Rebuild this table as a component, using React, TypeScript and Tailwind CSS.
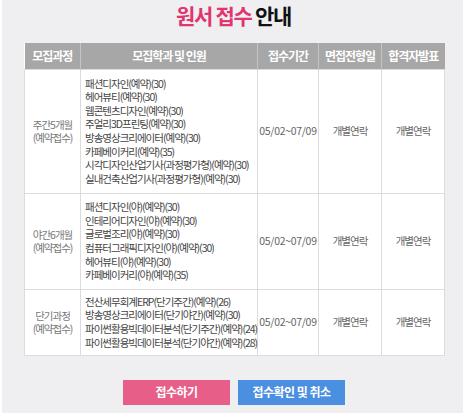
import React from "react";

const rows = [
  {
    h: "h-[124px]",
    course: ["주간5개월", "(예약접수)"],
    items: [
      "패션디자인(예약)(30)",
      "헤어뷰티(예약)(30)",
      "웹콘텐츠디자인(예약)(30)",
      "주얼리3D프린팅(예약)(30)",
      "방송영상크리에이터(예약)(30)",
      "카페베이커리(예약)(35)",
      "시각디자인산업기사(과정평가형)(예약)(30)",
      "실내건축산업기사(과정평가형)(예약)(30)",
    ],
  },
  {
    h: "h-[96px]",
    course: ["야간6개월", "(예약접수)"],
    items: [
      "패션디자인(야)(예약)(30)",
      "인테리어디자인(야)(예약)(30)",
      "글로벌조리(야)(예약)(30)",
      "컴퓨터그래픽디자인(야)(예약)(30)",
      "헤어뷰티(야)(예약)(30)",
      "카페베이커리(야)(예약)(35)",
    ],
  },
  {
    h: "h-[66px]",
    course: ["단기과정", "(예약접수)"],
    items: [
      "전산세무회계ERP(단기주간)(예약)(26)",
      "방송영상크리에이터(단기야간)(예약)(30)",
      "파이썬활용빅데이터분석(단기주간)(예약)(24)",
      "파이썬활용빅데이터분석(단기야간)(예약)(28)",
    ],
  },
];

const font = { fontFamily: '"Noto Sans CJK KR", "Noto Sans", sans-serif' };

export default function App() {
  return (
    <div className="w-[474px] h-[418px] bg-white" style={font}>
      <div className="ml-[2px] w-[461px] h-[413px] bg-[#efeff2] flex flex-col">
        <h1 className="h-[30px] text-center text-[21px] leading-[30px] font-bold tracking-[-1.3px] text-[#111] pl-[2px]">
          <span className="text-[#e2346e]">원서 접수</span> 안내
        </h1>
        <div className="mt-[13px] ml-[22px] w-[420px]">
          <table className="w-[420px] table-fixed border-collapse bg-white text-[10.5px] tracking-[-1px]">
            <colgroup>
              <col className="w-[56px]" />
              <col className="w-[177px]" />
              <col className="w-[61px]" />
              <col className="w-[63px]" />
              <col className="w-[63px]" />
            </colgroup>
            <thead>
              <tr className="bg-[#a7a7a7] text-white text-[12px] font-bold">
                <th className="h-[26px] p-0 border-r border-[#c4c4c4] font-bold">모집과정</th>
                <th className="h-[26px] p-0 border-r border-[#c4c4c4] font-bold">모집학과 및 인원</th>
                <th className="h-[26px] p-0 border-r border-[#c4c4c4] font-bold">접수기간</th>
                <th className="h-[26px] p-0 border-r border-[#c4c4c4] font-bold">면접전형일</th>
                <th className="h-[26px] p-0 font-bold">합격자발표</th>
              </tr>
            </thead>
            <tbody>
              {rows.map((r, i) => (
                <tr key={i} className="border border-[#dcdcdc]">
                  <td className={`${r.h} p-0 border border-[#dcdcdc] text-center text-[#777] leading-[13px] align-middle`}>
                    {r.course[0]}
                    <br />
                    {r.course[1]}
                  </td>
                  <td className="p-0 pl-[4px] border border-[#dcdcdc] text-[#444] leading-[13.6px] whitespace-nowrap align-middle">
                    {r.items.map((it) => (
                      <div key={it}>{it}</div>
                    ))}
                  </td>
                  <td className="p-0 border border-[#dcdcdc] text-center text-[#666] tracking-[-0.3px]">05/02~07/09</td>
                  <td className="p-0 border border-[#dcdcdc] text-center text-[#666]">개별연락</td>
                  <td className="p-0 border border-[#dcdcdc] text-center text-[#666]">개별연락</td>
                </tr>
              ))}
            </tbody>
          </table>
        </div>
        <div className="mt-[24px] flex justify-center gap-[8px] pl-[3px]">
          <button className="w-[107px] h-[25px] bg-[#e75f88] text-white text-[12px] font-bold tracking-[-0.5px]">
            접수하기
          </button>
          <button className="w-[107px] h-[25px] bg-[#4a8fe0] text-white text-[12px] font-bold tracking-[-0.5px]">
            접수확인 및 취소
          </button>
        </div>
      </div>
    </div>
  );
}
